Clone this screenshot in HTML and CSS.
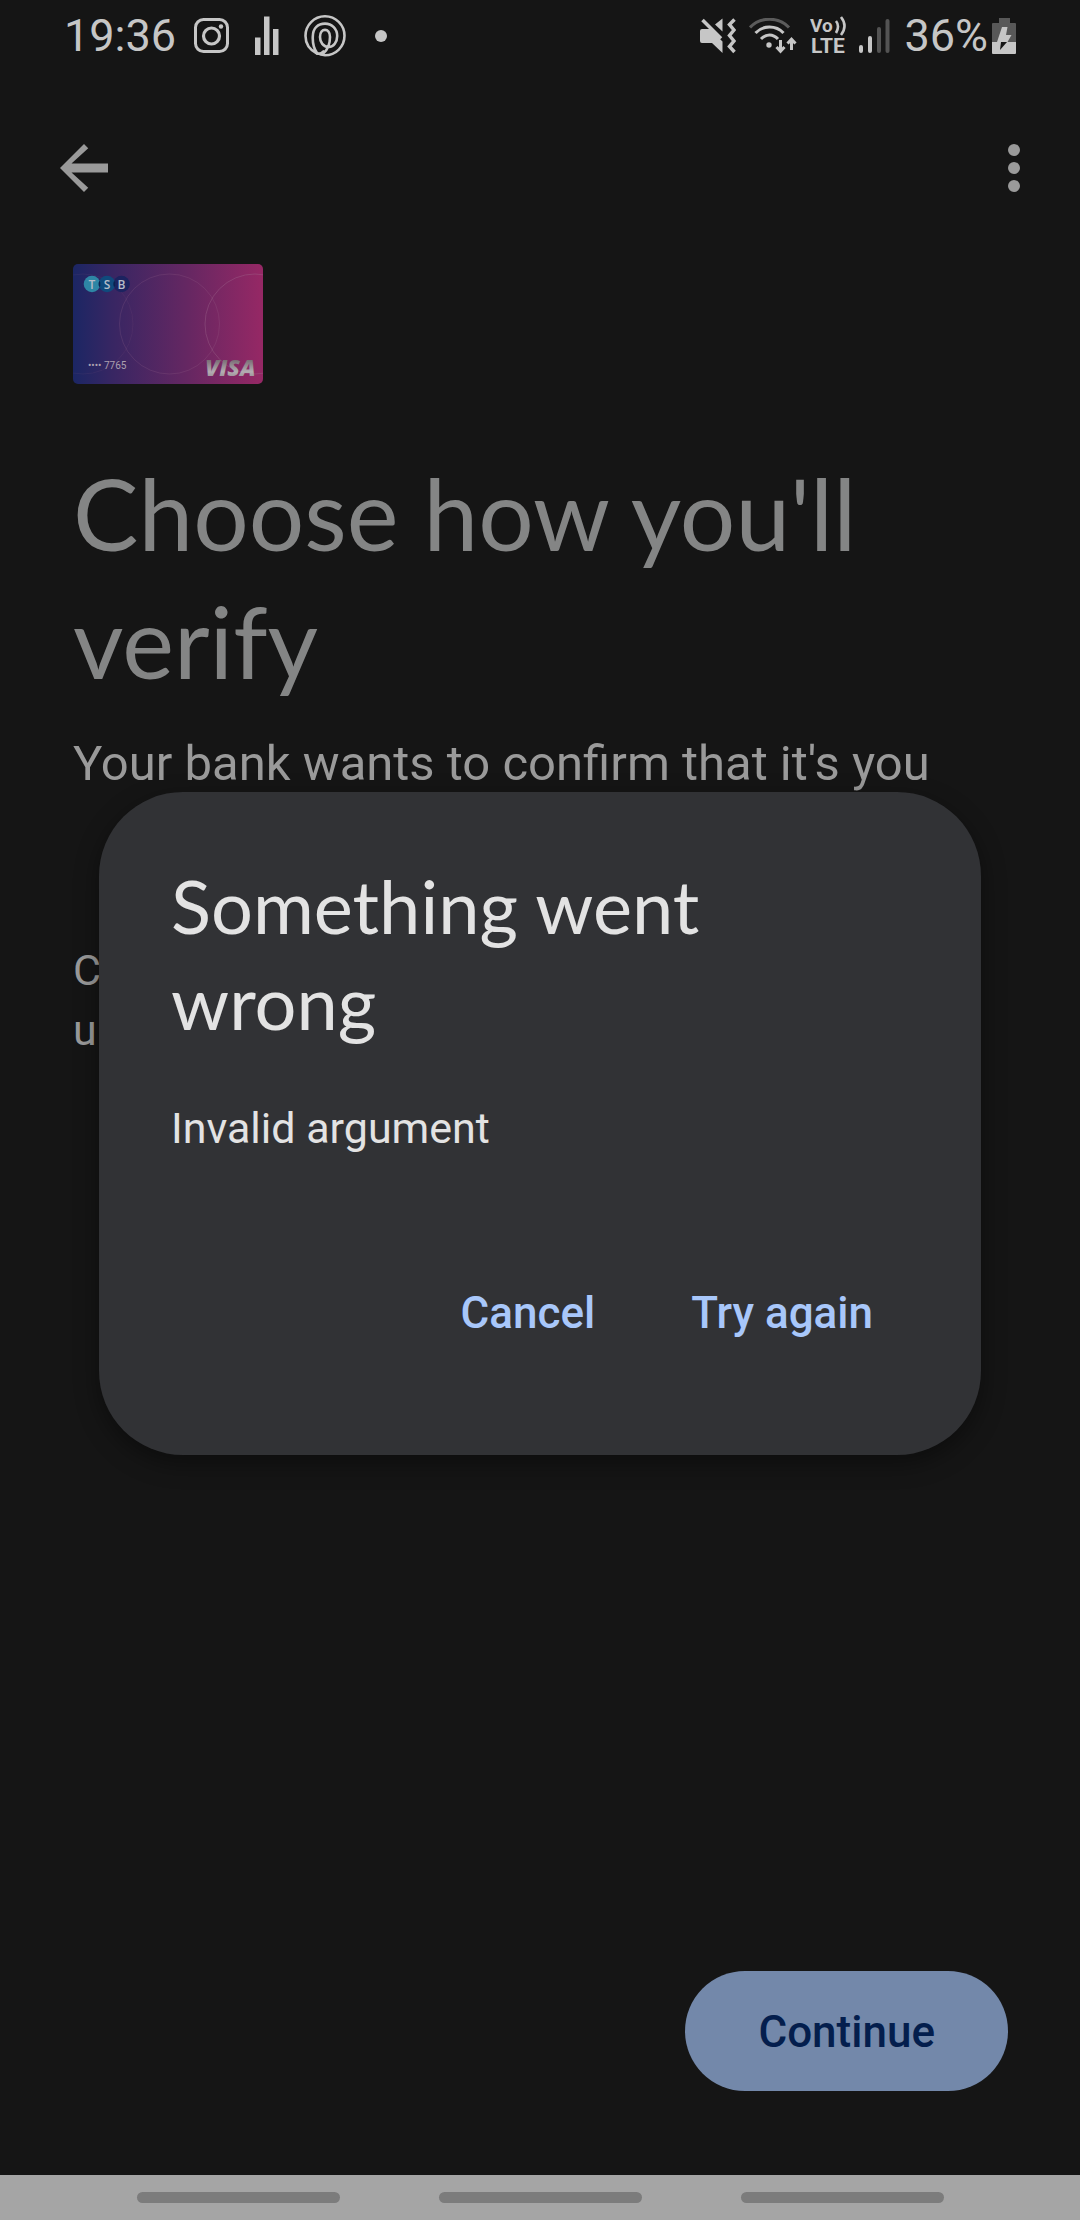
FILE: index.html
```html
<!DOCTYPE html>
<html lang="en">
<head>
<meta charset="utf-8">
<meta name="viewport" content="width=device-width, initial-scale=1">
<title>Choose how you'll verify</title>
<link rel="stylesheet" href="styles.css">
</head>
<body>
<header class="status">
  <div class="status-left">
    <time class="status-text">19:36</time>
    <div class="notifications">
      <svg width="36" height="36" viewBox="0 0 36 36" fill="none" stroke="currentColor" aria-label="Instagram" role="img">
        <rect x="1.5" y="1.5" width="32" height="32" rx="8" stroke-width="3"/>
        <circle cx="17.5" cy="18" r="8" stroke-width="3.2"/>
        <circle cx="27" cy="8.500" r="2.200" fill="currentColor" stroke="none"/>
      </svg>
      <svg width="24" height="40" viewBox="0 0 24 40" fill="currentColor" aria-hidden="true">
        <path d="M0 21.500h5.500V39H0zM9 .5h5.500V39H9zM18 13h5.500v26H18z"/>
      </svg>
      <svg width="42" height="42" viewBox="0 0 42 42" fill="none" stroke="currentColor" stroke-width="2.600" stroke-linecap="round" aria-hidden="true">
        <path d="M13 38.500C6 35 1.500 29 1.500 21A19.500 19.500 0 1 1 21 40.300C17.500 40.300 15.500 39.500 13 38C10 34 8.500 28 8.800 21.500C9 13 14 8.600 21 8.600C28 8.600 33.200 14 33.200 21C33.200 27 29.500 32 25 32C19 32 16 27 16 22C16 12.500 26 12.500 26 22C26 29 23.500 35 19 38.800"/>
        <path d="M13 38.500C16 39.500 18 38 19.500 36.500"/>
      </svg>
      <svg width="20" height="12" viewBox="0 0 20 12" fill="currentColor" aria-hidden="true"><circle cx="10" cy="6" r="6"/></svg>
    </div>
  </div>
  <div class="status-right">
    <svg width="36" height="36" viewBox="0 0 36 36" fill="currentColor" aria-label="Vibrate" role="img">
      <path d="M2 11h8l12.500 12.500V35L12 25H2a2 2 0 0 1-2-2V13a2 2 0 0 1 2-2zM22.500.500V13.500L15 6.500z"/>
      <path d="M2.500 2L21 20.500" stroke="currentColor" stroke-width="3.500"/>
      <path d="M34.500 1.500L29.500 6.500L34 12L29.500 17.500L34 23L29.500 28.500L34.500 34" fill="none" stroke="currentColor" stroke-width="3.500"/>
    </svg>
    <svg width="48" height="36" viewBox="0 0 48 36" fill="none" stroke="currentColor" stroke-width="3" aria-label="Wi-Fi" role="img">
      <path d="M1 9.500C11-1.500 30-1.500 40 9.500" opacity=".4"/>
      <path d="M6.500 15C14 7 27 7 34.500 15M12 21C17 15.500 24 15.500 29 21"/>
      <circle cx="20" cy="27" r="2.700" fill="currentColor" stroke="none"/>
      <path d="M31.500 22v11M27.500 29l4 4.300 4-4.300M42.500 32V21M38.500 25.500l4-4.300 4 4.300"/>
    </svg>
    <svg class="volte" width="36" height="60" viewBox="0 0 36 60" fill="currentColor">
      <text x="0" y="26" font-size="19">Vo</text>
      <text x="1" y="47" font-size="21">LTE</text>
      <path d="M26 15q4 5 0 12M31 11q7 9 0 18" fill="none" stroke="currentColor" stroke-width="2.600"/>
    </svg>
    <svg width="32" height="36" viewBox="0 0 32 36" stroke="currentColor" stroke-width="4" stroke-linecap="round" aria-label="Signal" role="img">
      <path d="M2 29v4M11 20v13"/>
      <path d="M20 11v22M28.500 3v30" opacity=".35"/>
    </svg>
    <div class="battery">
      <span class="status-text">36%</span>
      <svg width="24" height="36" viewBox="0 0 24 36" fill="currentColor" aria-label="Charging" role="img">
        <path d="M7 0h11v5h5a1 1 0 0 1 1 1v18H0V6a1 1 0 0 1 1-1h6z" fill="#585858"/>
        <path d="M0 24h24v11a1 1 0 0 1-1 1H1a1 1 0 0 1-1-1z"/>
        <path d="M10 9h5.500L14 17h5.500l-4 7H5z"/>
        <path d="M9 24h6L8 32z" fill="#151515"/>
      </svg>
    </div>
  </div>
</header>
<div class="screen">
  <main class="page">
    <nav class="appbar">
      <button class="icon-button" aria-label="Back">
        <svg width="72" height="72" viewBox="0 0 24 24" fill="currentColor"><path d="M20 10.500H7.830l5.590-5.090L12 4l-8 8 8 8 1.410-1.410L7.830 13.500H20z"/></svg>
      </button>
      <button class="icon-button" aria-label="More options">
        <svg width="72" height="72" viewBox="0 0 24 24" fill="currentColor"><circle cx="12" cy="6" r="2"/><circle cx="12" cy="12" r="2"/><circle cx="12" cy="18" r="2"/></svg>
      </button>
    </nav>
    <div class="content">
      <svg class="card" width="190" height="120" viewBox="0 0 190 120">
        <defs>
          <linearGradient id="card-fill"><stop offset="0" stop-color="#1b2664"/><stop offset=".2" stop-color="#372663"/><stop offset=".6" stop-color="#652762"/><stop offset="1" stop-color="#962865"/></linearGradient>
          <linearGradient id="silver" x1="0" y1="0" x2="0" y2="1"><stop offset=".3" stop-color="#7d7078"/><stop offset=".65" stop-color="#b3adb2"/><stop offset="1" stop-color="#85737f"/></linearGradient>
          <clipPath id="card-shape"><rect width="190" height="120" rx="5"/></clipPath>
        </defs>
        <g clip-path="url(#card-shape)">
          <rect width="190" height="120" fill="url(#card-fill)"/>
          <g fill="none" stroke="#a27093" stroke-width=".5">
            <circle cx="10" cy="60" r="50" opacity=".2"/><circle cx="96.500" cy="60" r="50" opacity=".4"/><circle cx="182" cy="60" r="50" opacity=".7"/>
          </g>
          <circle cx="48.500" cy="20" r="8.300" fill="#1c2360"/>
          <circle cx="34" cy="20" r="8.300" fill="#104a7d"/>
          <circle cx="19" cy="20" r="8.300" fill="#2e86a5"/>
          <path d="M26.500 16.500q2 3.500 0 7q-2-3.500 0-7zM41.300 16.500q2 3.500 0 7q-2-3.500 0-7z" fill="#0b2150"/>
        </g>
        <g class="bank" fill="#b5bcc8"><text x="19" y="24.500">T</text><text x="34" y="24.500">S</text><text x="48.500" y="24.500">B</text></g>
        <text class="digits" x="15" y="105" fill="#aba0af">•••• 7765</text>
        <text class="visa" x="132" y="112" fill="url(#silver)">VISA</text>
      </svg>
      <h1 class="title">Choose how you'll verify</h1>
      <p class="subtitle">Your bank wants to confirm that it's you</p>
      <p class="body-text detail">C<br>u</p>
    </div>
    <div class="footer"><button class="button continue">Continue</button></div>
  </main>
  <div class="overlay">
    <section class="dialog" role="alertdialog" aria-labelledby="dialog-title">
      <h2 class="dialog-title" id="dialog-title">Something went wrong</h2>
      <p class="body-text">Invalid argument</p>
      <div class="actions">
        <button class="button action">Cancel</button>
        <button class="button action">Try again</button>
      </div>
    </section>
  </div>
</div>
<div class="gestures"><span class="pill"></span><span class="pill"></span><span class="pill"></span></div>
</body>
</html>
```
FILE: styles.css
```css
* { box-sizing: border-box; }
body {
  margin: 0;
  min-height: 100vh;
  display: flex;
  flex-direction: column;
  background: #151515;
  color: #9a9a9a;
  font-family: Roboto, "Liberation Sans", sans-serif;
}
h1, h2, p { margin: 0; font-weight: 400; }
svg { display: block; flex: none; }
button {
  border: 0;
  background: none;
  padding: 0;
  color: inherit;
  font-family: inherit;
}

.status {
  height: 72px;
  padding: 0 64px;
  display: flex;
  align-items: center;
  justify-content: space-between;
  color: #c6c6c6;
}
.status-left, .status-right, .notifications, .battery {
  display: flex;
  align-items: center;
}
.status-left { gap: 18px; }
.notifications { gap: 25px; }
.status-right { gap: 13px; }
.battery { gap: 4px; }
.status-text { font-size: 45px; line-height: 72px; }
.volte { font-weight: 700; }

.screen {
  position: relative;
  flex: 1;
  display: flex;
  flex-direction: column;
}
.page {
  flex: 1;
  display: flex;
  flex-direction: column;
}
.appbar {
  display: flex;
  justify-content: space-between;
  padding: 60px 30px 60px 48px;
}
.content { padding: 0 73px; }
.title {
  margin-top: 65px;
  font-family: Lato, sans-serif;
  font-size: 98px;
  line-height: 128px;
  color: #848585;
}
.subtitle {
  margin-top: 23px;
  font-size: 49px;
  line-height: 72px;
}
.body-text { font-size: 43px; line-height: 60px; }
.detail { margin-top: 140px; }
.bank {
  font: 600 12px "Open Sans", sans-serif;
  text-anchor: middle;
}
.digits { font-size: 10px; }
.visa { font: italic 800 23px "Open Sans", sans-serif; }

.footer {
  margin-top: auto;
  padding: 0 72px 84px;
  display: flex;
  justify-content: flex-end;
}
.button {
  height: 120px;
  font-size: 44px;
  font-weight: 500;
  line-height: 60px;
}
.continue {
  padding: 2px 73px 0;
  border-radius: 60px;
  background: #7388aa;
  color: #041e4d;
}

.overlay {
  position: absolute;
  inset: 0;
  display: flex;
  align-items: center;
  padding: 0 99px;
}
.dialog {
  flex: 1;
  padding: 66px 72px 82px;
  border-radius: 84px;
  background: #313235;
  color: #e3e3e3;
  box-shadow: 0 8px 24px rgba(0, 0, 0, .4);
}
.dialog-title {
  margin-bottom: 48px;
  font-family: Lato, sans-serif;
  font-size: 74px;
  line-height: 96px;
}
.actions {
  display: flex;
  justify-content: flex-end;
  gap: 24px;
  margin-top: 95px;
}
.action { padding: 0 36px; color: #a8c7fa; }

.gestures {
  height: 45px;
  display: flex;
  align-items: center;
  justify-content: center;
  gap: 99px;
  background: #a5a5a5;
}
.pill {
  width: 203px;
  height: 11px;
  border-radius: 6px;
  background: #7c7c7c;
}
```
